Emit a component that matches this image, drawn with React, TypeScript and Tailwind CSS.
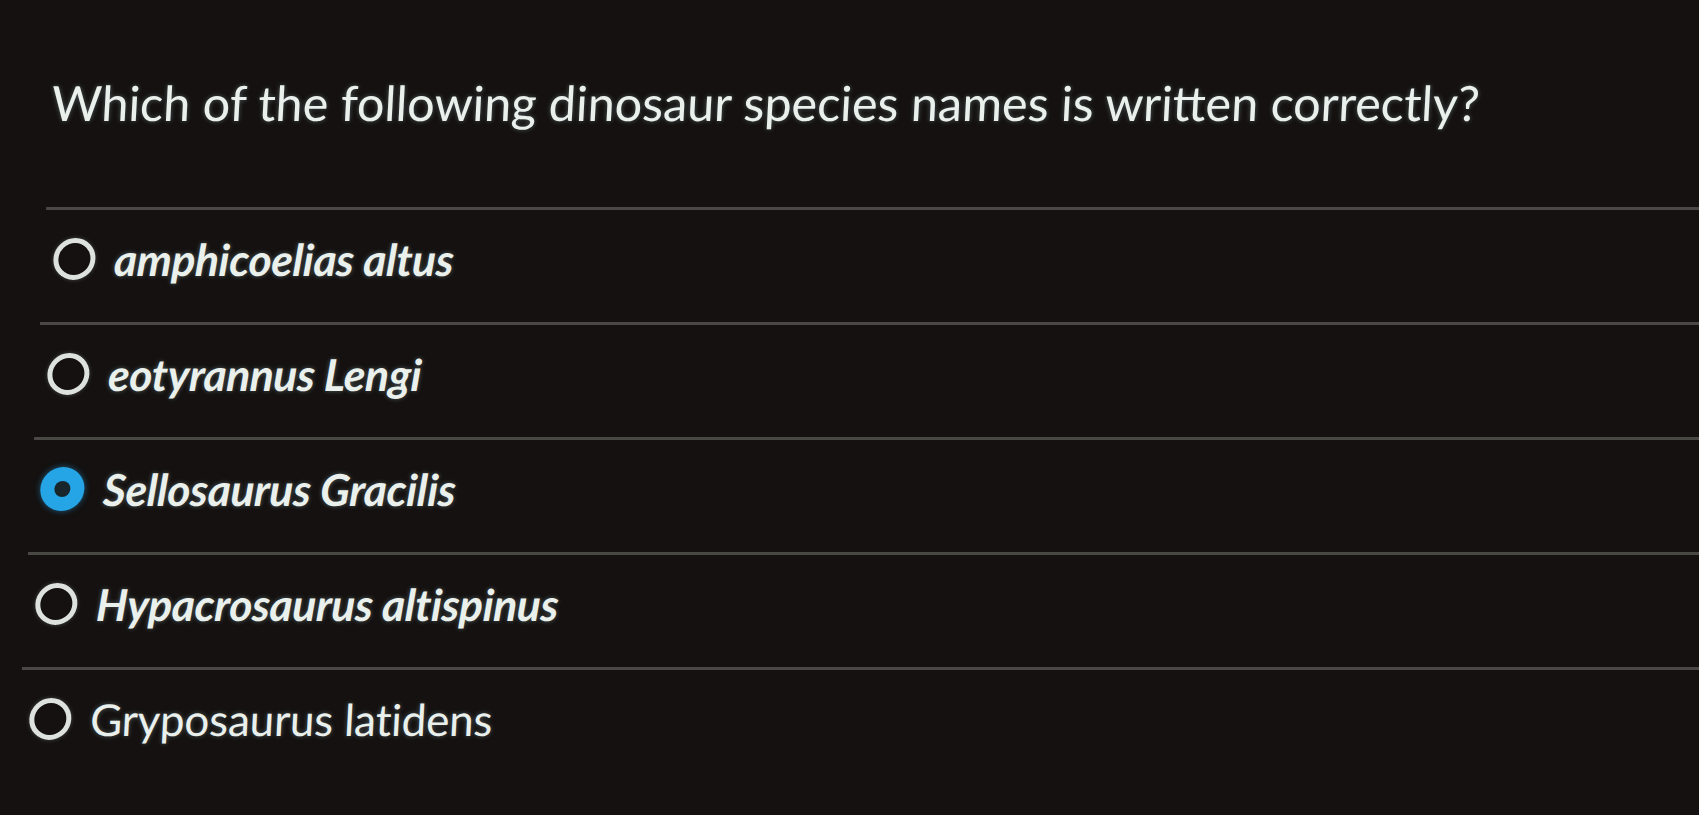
import React from "react";

type Option = { label: string; emphasis: boolean; selected?: boolean };

const options: Option[] = [
  { label: "amphicoelias altus", emphasis: true },
  { label: "eotyrannus Lengi", emphasis: true },
  { label: "Sellosaurus Gracilis", emphasis: true, selected: true },
  { label: "Hypacrosaurus altispinus", emphasis: true },
  { label: "Gryposaurus latidens", emphasis: false },
];

function Radio({ checked }: { checked?: boolean }) {
  if (checked) {
    return (
      <span className="-ml-[1px] flex h-[44px] w-[44px] shrink-0 items-center justify-center rounded-full bg-[#26a5e6] shadow-[0_0_6px_rgba(40,170,240,0.5)]">
        <span className="h-[16px] w-[16px] rounded-full bg-[#18262c]" />
      </span>
    );
  }
  return <span className="h-[42px] w-[42px] shrink-0 rounded-full border-[5px] border-[#dde2de] shadow-[0_0_4px_rgba(220,235,235,0.25)]" />;
}

export default function App() {
  return (
    <div className="h-[815px] w-full overflow-hidden bg-[#141110] font-[Lato,'Noto_Sans',sans-serif] text-[#eaf0ec]">
      <div className="w-[1800px] origin-top-left -skew-x-3 pl-[57px] pt-[78px]">
        <h1 className="text-[48.5px] leading-none font-normal [text-shadow:0_0_5px_rgba(190,225,235,0.35)]">
          Which of the following dinosaur species names is written correctly?
        </h1>
        <ul className="mt-[80px]">
          {options.map(opt => (
            <li key={opt.label} className="flex h-[115px] items-center gap-[19px] border-t-[3px] border-[#4a4845] pb-[14px] pl-[10px]">
              <Radio checked={opt.selected} />
              <span className={`text-[44px] leading-none tracking-[-0.2px] [text-shadow:0_0_5px_rgba(190,225,235,0.35)] ${opt.emphasis ? "font-bold italic" : "font-normal"}`}>
                {opt.label}
              </span>
            </li>
          ))}
        </ul>
      </div>
    </div>
  );
}
